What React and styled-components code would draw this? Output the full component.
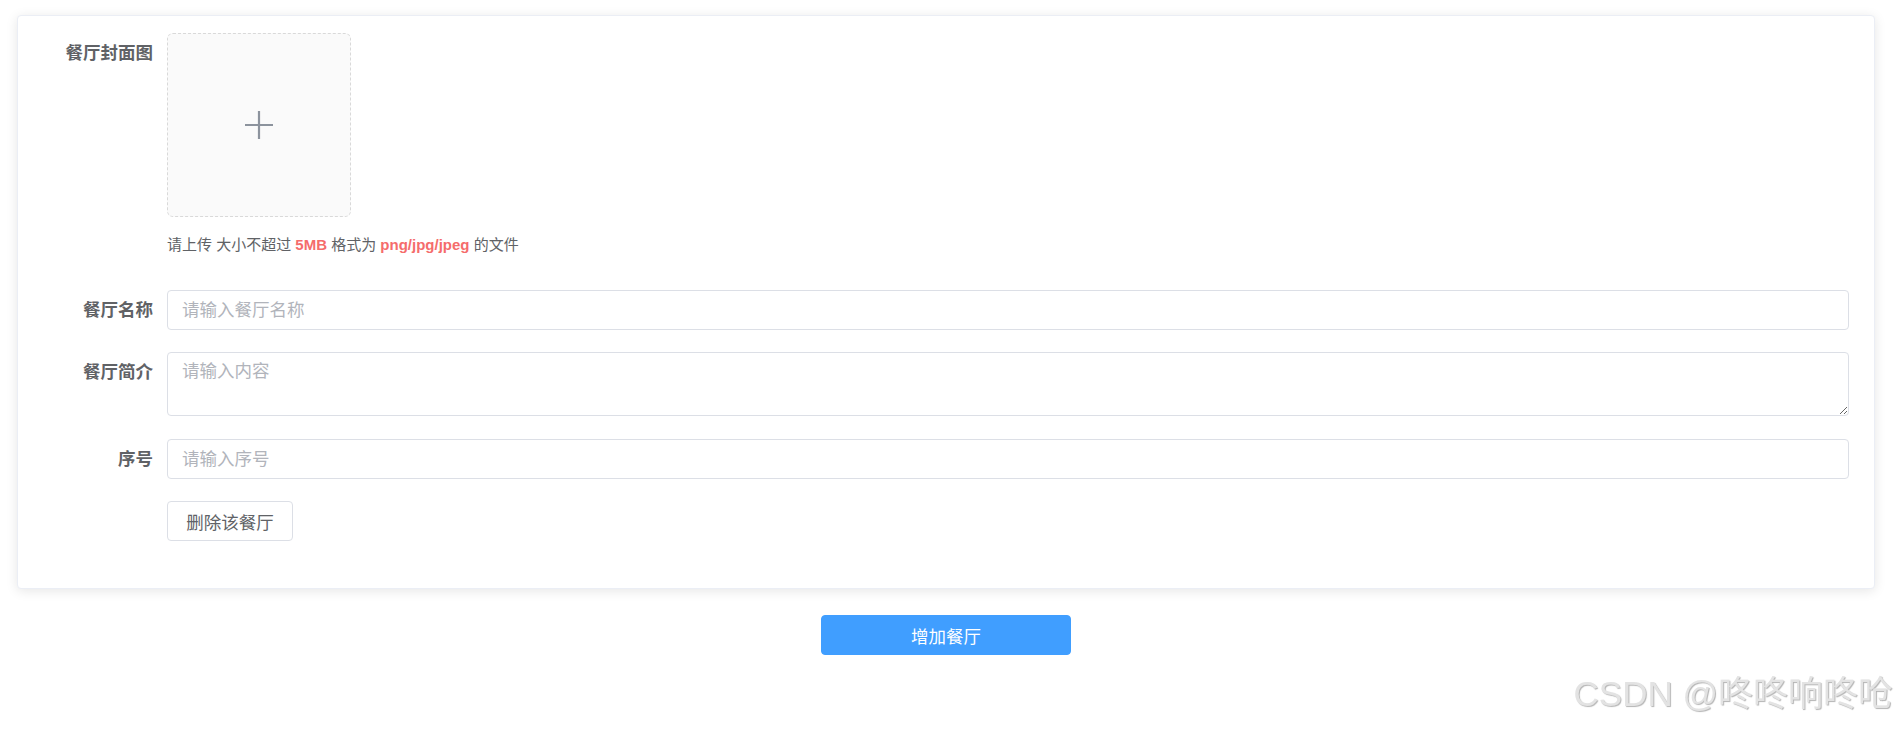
import React from 'react'
import styled, { createGlobalStyle } from 'styled-components'

const GlobalStyle = createGlobalStyle`
  html, body {
    margin: 0;
    padding: 0;
    background: #fff;
    font-family: "Liberation Sans", Arial, "Noto Sans CJK SC", sans-serif;
    color: #606266;
  }
  * {
    box-sizing: border-box;
  }
`

const Page = styled.div`
  padding: 15px 25px 0 17px;
  min-height: 730px;
`

const Card = styled.div`
  background: #fff;
  border: 1px solid #ebeef5;
  border-radius: 4px;
  box-shadow: 0 2px 12px 0 rgba(0, 0, 0, 0.1);
  padding: 17px 25px 47px 0;
`

const FormItem = styled.div`
  display: flex;
  align-items: flex-start;
  margin-bottom: ${(p) => p.$gap ?? 23}px;
  &:last-child {
    margin-bottom: 0;
  }
`

const Label = styled.label`
  flex: 0 0 149px;
  padding-right: 14px;
  text-align: right;
  font-size: 17.5px;
  font-weight: bold;
  line-height: 40px;
  height: 40px;
  color: #606266;
`

const Control = styled.div`
  flex: 1;
  min-width: 0;
`

const Uploader = styled.div`
  width: 184px;
  height: 184px;
  border: 1px dashed #d9d9d9;
  border-radius: 6px;
  background: #fafafa;
  display: flex;
  align-items: center;
  justify-content: center;
  cursor: pointer;
`

const Tip = styled.div`
  margin-top: 18px;
  font-size: 15px;
  line-height: 20px;
  color: #606266;
  white-space: pre;
`

const Em = styled.b`
  color: #f56c6c;
`

const Input = styled.input`
  display: block;
  width: 100%;
  height: 40px;
  border: 1px solid #dcdfe6;
  border-radius: 4px;
  padding: 0 14px;
  font-family: inherit;
  font-size: 17.5px;
  color: #606266;
  outline: none;
  &::placeholder {
    color: #b1b4bb;
  }
`

const TextArea = styled.textarea`
  display: block;
  width: 100%;
  height: 64px;
  border: 1px solid #dcdfe6;
  border-radius: 4px;
  padding: 5px 14px;
  font-family: inherit;
  font-size: 17.5px;
  line-height: 1.5;
  color: #606266;
  resize: vertical;
  outline: none;
  &::placeholder {
    color: #b1b4bb;
  }
`

const Button = styled.button`
  height: 40px;
  border-radius: 4px;
  font-family: inherit;
  font-size: 17.5px;
  cursor: pointer;
  border: 1px solid ${(p) => (p.$primary ? '#409eff' : '#dcdfe6')};
  background: ${(p) => (p.$primary ? '#409eff' : '#fff')};
  color: ${(p) => (p.$primary ? '#fff' : '#606266')};
  width: ${(p) => p.$width}px;
  padding: 0;
`

const Footer = styled.div`
  display: flex;
  justify-content: center;
  margin-top: 26px;
`

const Watermark = styled.div`
  position: fixed;
  right: 7px;
  top: 676px;
  font-size: 35px;
  line-height: 35px;
  color: #e3e3e3;
  text-shadow: 1px 1px 1px #b4b4b4;
  pointer-events: none;
  white-space: nowrap;
`

function PlusIcon() {
  return (
    <svg width="28" height="28" viewBox="0 0 28 28">
      <path d="M14 0v28M0 14h28" stroke="#8c939d" strokeWidth="2.2" />
    </svg>
  )
}

export default function App() {
  return (
    <Page>
      <GlobalStyle />
      <Card>
        <FormItem $gap={35}>
          <Label>餐厅封面图</Label>
          <Control>
            <Uploader>
              <PlusIcon />
            </Uploader>
            <Tip>
              请上传 大小不超过 <Em>5MB</Em> 格式为 <Em>png/jpg/jpeg</Em> 的文件
            </Tip>
          </Control>
        </FormItem>
        <FormItem $gap={22}>
          <Label>餐厅名称</Label>
          <Control>
            <Input placeholder="请输入餐厅名称" />
          </Control>
        </FormItem>
        <FormItem>
          <Label>餐厅简介</Label>
          <Control>
            <TextArea placeholder="请输入内容" />
          </Control>
        </FormItem>
        <FormItem $gap={22}>
          <Label>序号</Label>
          <Control>
            <Input placeholder="请输入序号" />
          </Control>
        </FormItem>
        <FormItem>
          <Label />
          <Control>
            <Button $width={126}>删除该餐厅</Button>
          </Control>
        </FormItem>
      </Card>
      <Footer>
        <Button $primary $width={250}>增加餐厅</Button>
      </Footer>
      <Watermark>CSDN @咚咚响咚呛</Watermark>
    </Page>
  )
}
